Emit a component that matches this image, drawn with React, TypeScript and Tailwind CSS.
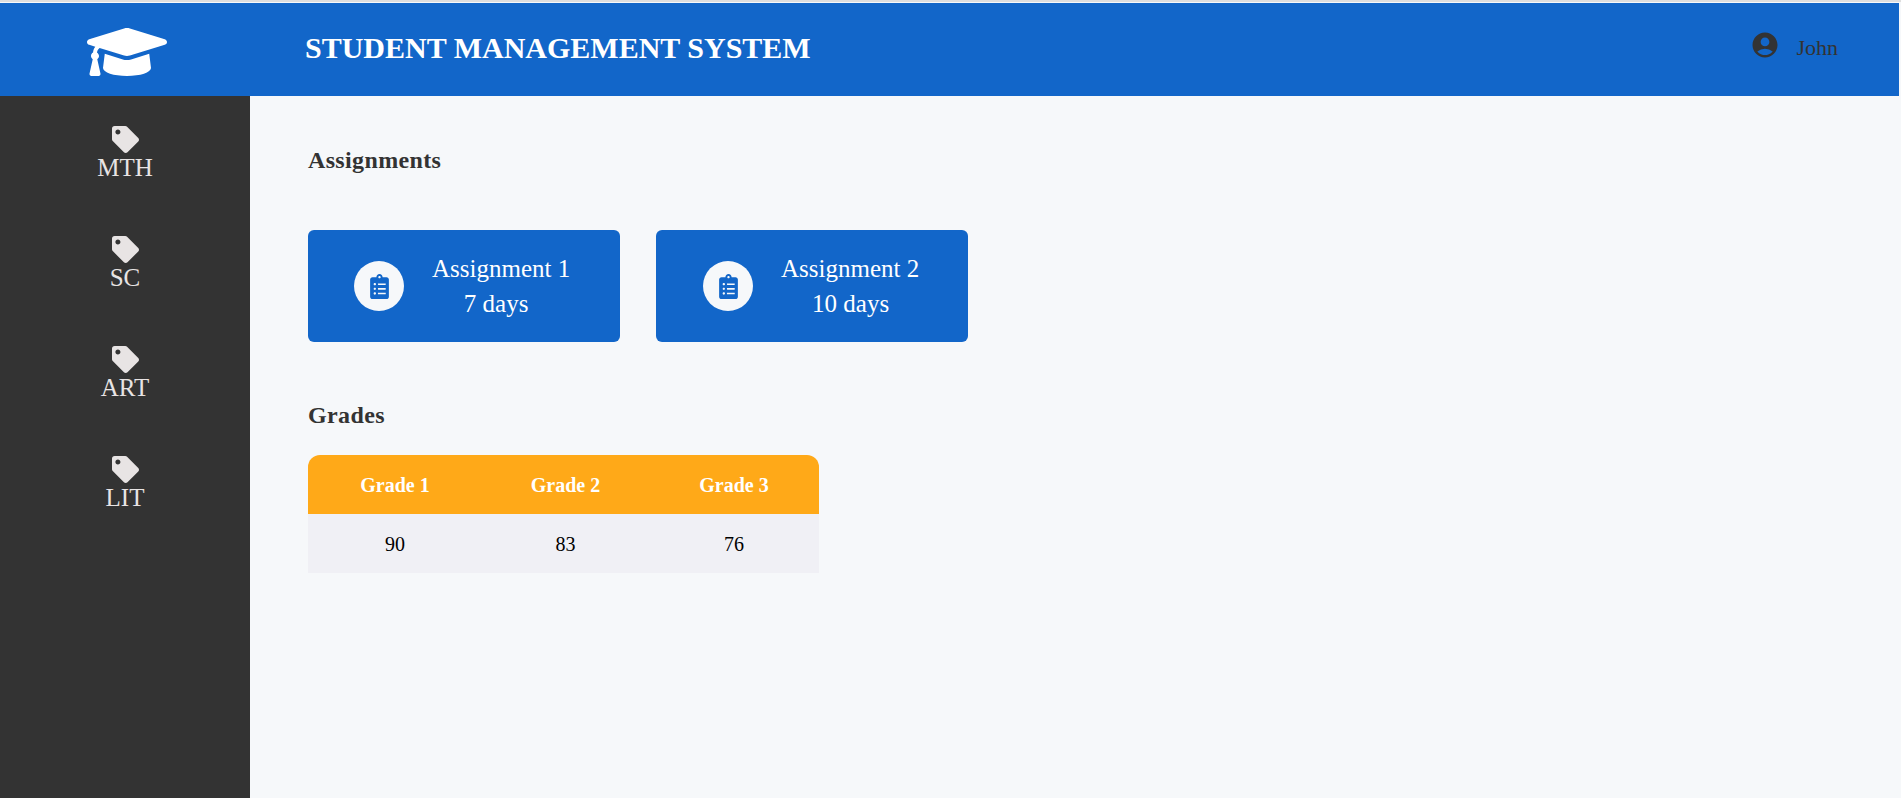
import React from 'react';
import { FaGraduationCap, FaTag, FaClipboardList } from 'react-icons/fa';
import { MdAccountCircle } from 'react-icons/md';

const subjects = ['MTH', 'SC', 'ART', 'LIT'];

const assignments = [
  { name: 'Assignment 1', due: '7 days', cardClass: 'pl-[46px]', dueClass: 'pr-[10px]' },
  { name: 'Assignment 2', due: '10 days', cardClass: 'pl-[47px]', dueClass: 'pl-[1px]' },
];

const grades = [
  { label: 'Grade 1', value: 90 },
  { label: 'Grade 2', value: 83 },
  { label: 'Grade 3', value: 76 },
];

const App: React.FC = () => {
  return (
    <div className="h-[798px] flex flex-col overflow-hidden bg-[#f6f8fa] border-t-2 border-[#dedede] pt-[1px] pr-[2px] font-['Liberation_Serif',serif]">
      <header className="h-[93px] shrink-0 flex items-center bg-[#1266c9]">
        <div className="w-[250px] shrink-0 flex justify-center pt-[4px] pl-[4px]">
          <FaGraduationCap className="w-[80px] h-[64px] text-white" />
        </div>
        <h1 className="ml-[55px] mb-[5px] text-[30px] font-bold text-white">STUDENT MANAGEMENT SYSTEM</h1>
        <div className="ml-auto mr-[61px] mb-[4px] flex items-center gap-[16px] text-[#333333]">
          <MdAccountCircle className="w-[30px] h-[30px] mb-[5px]" />
          <span className="text-[22px]">John</span>
        </div>
      </header>

      <div className="flex-1 flex">
        <aside className="w-[250px] shrink-0 bg-[#333333] pt-[30px] flex flex-col gap-[53px]">
          {subjects.map(s => (
            <div key={s} className="flex flex-col items-center text-[#e8e4e4]">
              <FaTag className="w-[27px] h-[27px]" />
              <span className="text-[25px] leading-[30px]">{s}</span>
            </div>
          ))}
        </aside>

        <main className="flex-1 pl-[58px] pt-[52px]">
          <h2 className="text-[24px] font-bold text-[#333333] leading-[25px] tracking-[0.35px]">Assignments</h2>

          <div className="mt-[57px] flex gap-[36px]">
            {assignments.map(a => (
              <div key={a.name} className={`w-[312px] h-[112px] rounded-[6px] bg-[#1266c9] flex items-center text-white ${a.cardClass}`}>
                <div className="w-[50px] h-[50px] rounded-full bg-[#f6f8fa] flex items-center justify-center">
                  <FaClipboardList className="w-[19px] h-[25px] text-[#1266c9]" />
                </div>
                <div className="ml-[28px] text-center text-[25px] leading-[35px]">
                  <div>{a.name}</div>
                  <div className={a.dueClass}>{a.due}</div>
                </div>
              </div>
            ))}
          </div>

          <h2 className="mt-[61px] text-[24px] font-bold text-[#333333] leading-[25px] tracking-[0.4px]">Grades</h2>

          <div className="mt-[27px] w-[511px]">
            <div className="grid grid-cols-[174px_167px_170px] h-[59px] items-center bg-[#ffa918] rounded-t-[12px] text-[20px] font-bold text-white text-center">
              {grades.map(g => <div key={g.label}>{g.label}</div>)}
            </div>
            <div className="grid grid-cols-[174px_167px_170px] h-[59px] items-center bg-[#f0f0f5] text-[20px] text-black text-center">
              {grades.map(g => <div key={g.label}>{g.value}</div>)}
            </div>
          </div>
        </main>
      </div>
    </div>
  );
};

export default App;
